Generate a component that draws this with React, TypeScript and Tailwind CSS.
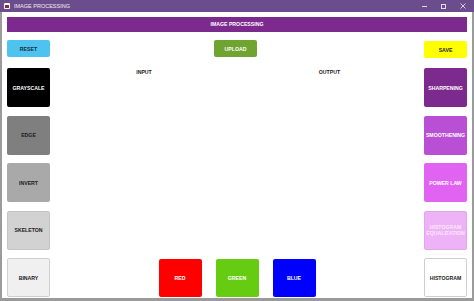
const font = { fontFamily: '"Liberation Sans", Arial, sans-serif' };

function Btn({ label, cls }: { label: string; cls: string }) {
  return (
    <div
      className={`flex items-center justify-center rounded-[2px] text-center text-[5.2px] font-bold leading-[6px] ${cls}`}
    >
      {label}
    </div>
  );
}

export default function App() {
  const left = [
    { label: 'GRAYSCALE', cls: 'bg-black text-white' },
    { label: 'EDGE', cls: 'bg-[#7f7f7f] text-[#1a1a1a]' },
    { label: 'INVERT', cls: 'bg-[#a9a9a9] text-[#1a1a1a]' },
    { label: 'SKELETON', cls: 'bg-[#d2d2d2] text-[#1a1a1a] border border-[#c4c4c4]' },
    { label: 'BINARY', cls: 'bg-[#f0f0f0] text-[#1a1a1a] border border-[#cfcfcf]' },
  ];
  const right = [
    { label: 'SHARPENING', cls: 'bg-[#7d2a8e] text-white' },
    { label: 'SMOOTHENING', cls: 'bg-[#b94fd4] text-white' },
    { label: 'POWER LAW', cls: 'bg-[#e063f2] text-white' },
    { label: 'HISTOGRAM EQUALIZATION', cls: 'bg-[#eeb3f6] text-[#fbe6fd] border border-[#e3a6ec]' },
    { label: 'HISTOGRAM', cls: 'bg-white text-[#1a1a1a] border border-[#cfcfcf]' },
  ];

  return (
    <div className="w-[474px] h-[301px] flex flex-col bg-[#9b9b9b] overflow-hidden" style={font}>
      {/* title bar */}
      <div className="h-[12px] shrink-0 bg-[#6b4c8c] flex items-center pl-[4px] pr-[8px]">
        <div className="w-[6px] h-[6px] bg-white rounded-[1px] flex items-center justify-center">
          <div className="w-[4px] h-[3px] bg-[#8a2a3a]" />
        </div>
        <span className="ml-[4px] text-[5.5px] text-white/90">IMAGE PROCESSING</span>
        <div className="ml-auto flex items-center gap-[14px] text-white/80">
          <div className="w-[5px] h-[1px] bg-white/80" />
          <div className="w-[5px] h-[5px] border border-white/80" />
          <svg width="6" height="6" viewBox="0 0 6 6">
            <path d="M0.5 0.5L5.5 5.5M5.5 0.5L0.5 5.5" stroke="white" strokeOpacity="0.8" strokeWidth="0.9" />
          </svg>
        </div>
      </div>

      {/* window body */}
      <div className="flex-1 ml-[2px] mr-[2px] mb-[3px] bg-white px-[5px] flex flex-col">
        <div className="mt-[5px] h-[15px] bg-[#7d2a8e] flex items-center justify-center text-white text-[5.2px] font-bold">
          IMAGE PROCESSING
        </div>

        <div className="mt-[8px] flex justify-between items-start">
          <Btn label="RESET" cls="w-[43px] h-[17px] bg-[#4fc3ef] text-[#1a2a3a]" />
          <Btn label="UPLOAD" cls="-ml-[3px] w-[43px] h-[17px] bg-[#6ea42f] text-white" />
          <Btn label="SAVE" cls="mt-[1px] w-[43px] h-[17px] bg-[#ffff00] text-[#1a1a1a]" />
        </div>

        <div className="mt-[10px] flex">
          <div className="flex flex-col gap-[8.5px]">
            {left.map((b) => (
              <Btn key={b.label} label={b.label} cls={`w-[43px] h-[39px] ${b.cls}`} />
            ))}
          </div>

          <div className="flex-1 flex flex-col">
            <div className="grid grid-cols-2 mt-[1px] text-[5.2px] font-bold text-[#1a1a1a]">
              <div className="text-center pl-[1px]">INPUT</div>
              <div className="text-center pr-[2px]">OUTPUT</div>
            </div>
            <div className="mt-auto flex justify-center gap-[14px]">
              <Btn label="RED" cls="w-[43px] h-[38px] bg-[#ff0000] text-white" />
              <Btn label="GREEN" cls="w-[43px] h-[38px] bg-[#66cc11] text-white" />
              <Btn label="BLUE" cls="w-[43px] h-[38px] bg-[#0000ff] text-white" />
            </div>
          </div>

          <div className="flex flex-col gap-[8.5px]">
            {right.map((b) => (
              <Btn key={b.label} label={b.label} cls={`w-[43px] h-[39px] px-[2px] ${b.cls}`} />
            ))}
          </div>
        </div>
      </div>
    </div>
  );
}
